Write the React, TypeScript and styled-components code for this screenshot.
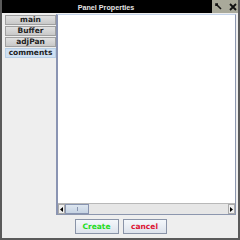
import React from "react";
import styled, { createGlobalStyle } from "styled-components";

const Global = createGlobalStyle`
  html, body { margin: 0; padding: 0; background: #000; }
  body { font-family: "DejaVu Sans", "Liberation Sans", sans-serif; }
`;

const Frame = styled.div`
  width: 240px;
  height: 240px;
  box-sizing: border-box;
  display: flex;
  flex-direction: column;
  background: #eeeeee;
  border-left: 2px solid #5a5a5a;
  border-right: 2px solid #5a5a5a;
  border-bottom: 2px solid #5a5a5a;
  overflow: hidden;
`;

const TitleBar = styled.div`
  height: 13px;
  flex: 0 0 13px;
  background: #000;
  display: flex;
  align-items: center;
  margin: 0 -2px;
`;

const Title = styled.div`
  flex: 1;
  text-align: center;
  color: #e4e4e4;
  font-family: "Liberation Sans", Arial, sans-serif;
  font-size: 7.2px;
  font-weight: bold;
  padding-top: 1px;
`;

const TitleButtons = styled.div`
  width: 28px;
  height: 13px;
  background: #a9a99a;
  display: flex;
  align-items: center;
  justify-content: space-around;
`;

const Body = styled.div`
  flex: 1;
  display: flex;
  flex-direction: column;
  padding: 1px 2px 0 3px;
`;

const Main = styled.div`
  flex: 1;
  display: flex;
`;

const TabColumn = styled.div`
  width: 51px;
  display: flex;
  flex-direction: column;
  padding-top: 1px;
`;

const Tab = styled.div<{ $active?: boolean }>`
  height: 10px;
  margin-bottom: 1px;
  box-sizing: border-box;
  border: 1px solid ${(p) => (p.$active ? "#b8cfe5" : "#a0a0a0")};
  background: ${(p) => (p.$active ? "#cfe0f2" : "linear-gradient(#e0e0e0, #c8c8c8)")};
  font-size: 7.5px;
  font-weight: bold;
  color: #222;
  text-align: center;
  line-height: 8px;
`;

const Content = styled.div`
  flex: 1;
  display: flex;
  flex-direction: column;
  background: #fff;
  border: 1px solid #8c96ae;
  border-top: 1px solid #c4d4ea;
  border-left: 2px solid #8a94b2;
`;

const TextArea = styled.div`
  flex: 1;
`;

const HScroll = styled.div`
  height: 10px;
  display: flex;
  background: #eeeeee;
  border-top: 1px solid #b8b8b8;
`;

const Arrow = styled.div`
  width: 7px;
  display: flex;
  align-items: center;
  justify-content: center;
  background: #eee;
  border: 1px solid #aaa;
  box-sizing: border-box;
`;

const Track = styled.div`
  flex: 1;
  display: flex;
  background: #e6e6e6;
`;

const Thumb = styled.div`
  width: 24px;
  box-sizing: border-box;
  border: 1px solid #8894b0;
  background: linear-gradient(#dde6f0, #c6d3e3);
  display: flex;
  align-items: center;
  justify-content: center;
`;

const Footer = styled.div`
  height: 23px;
  display: flex;
  align-items: center;
  justify-content: center;
  gap: 4px;
`;

const Btn = styled.button<{ $color: string }>`
  width: 44px;
  height: 15px;
  padding: 0;
  border: 1px solid #8a94a8;
  background: linear-gradient(#f4f7fb, #dde3ec);
  color: ${(p) => p.$color};
  font-family: "DejaVu Sans", sans-serif;
  font-size: 7.5px;
  font-weight: bold;
`;

export default function App() {
  return (
    <>
      <Global />
      <Frame>
        <TitleBar>
          <Title>Panel Properties</Title>
          <TitleButtons>
            <svg width="8" height="8" viewBox="0 0 8 8">
              <path d="M1 1 L6 6 M3 1 L1 1 L1 3" stroke="#111" strokeWidth="1.6" fill="none" />
            </svg>
            <svg width="8" height="8" viewBox="0 0 8 8">
              <path d="M1 1 L7 7 M7 1 L1 7" stroke="#111" strokeWidth="1.8" />
            </svg>
          </TitleButtons>
        </TitleBar>
        <Body>
          <Main>
            <TabColumn>
              <Tab>main</Tab>
              <Tab>Buffer</Tab>
              <Tab>adjPan</Tab>
              <Tab $active>comments</Tab>
            </TabColumn>
            <Content>
              <TextArea />
              <HScroll>
                <Arrow>
                  <svg width="3" height="5" viewBox="0 0 3 5"><path d="M3 0 L0 2.5 L3 5Z" fill="#000" /></svg>
                </Arrow>
                <Track>
                  <Thumb>
                    <svg width="1" height="4"><rect width="1" height="4" fill="#8894b0" /></svg>
                  </Thumb>
                </Track>
                <Arrow>
                  <svg width="3" height="5" viewBox="0 0 3 5"><path d="M0 0 L3 2.5 L0 5Z" fill="#000" /></svg>
                </Arrow>
              </HScroll>
            </Content>
          </Main>
          <Footer>
            <Btn $color="#22dd22">Create</Btn>
            <Btn $color="#dd1133">cancel</Btn>
          </Footer>
        </Body>
      </Frame>
    </>
  );
}
